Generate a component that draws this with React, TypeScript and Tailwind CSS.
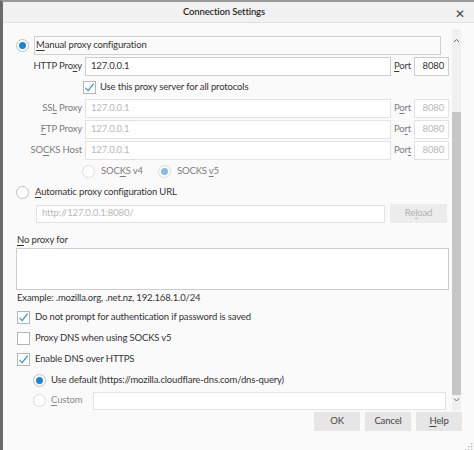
import React from "react";

const font = { fontFamily: 'Lato, "Noto Sans", Arial, sans-serif' };

function Radio({ checked, disabled }: { checked?: boolean; disabled?: boolean }) {
  return (
    <span
      className={`flex items-center justify-center w-[13px] h-[13px] shrink-0 rounded-full border bg-white ${
        disabled ? "border-[#dcdcdc]" : "border-[#b8c4cc]"
      }`}
    >
      {checked && (
        <span
          className={`w-[7px] h-[7px] rounded-full ${
            disabled ? "bg-[#7fbde6]" : "bg-[#1a86d6]"
          }`}
        />
      )}
    </span>
  );
}

function Checkbox({ checked }: { checked?: boolean }) {
  return (
    <span className="flex items-center justify-center w-[13px] h-[13px] shrink-0 border border-[#b5b5b5] bg-white">
      {checked && (
        <svg width="11" height="11" viewBox="0 0 11 11">
          <path d="M1.5 5.8 L4.2 8.6 L9.6 1.6" fill="none" stroke="#2f8ed8" strokeWidth="1.2" />
        </svg>
      )}
    </span>
  );
}

function U({ children }: { children: React.ReactNode }) {
  return <span className="underline underline-offset-2 decoration-[1px]">{children}</span>;
}

function ProxyRow({
  label,
  port,
  disabled,
}: {
  label: React.ReactNode;
  port: React.ReactNode;
  disabled?: boolean;
}) {
  const txt = disabled ? "text-[#b8b8b8]" : "text-[#333]";
  const border = disabled ? "border-[#e2e2e2]" : "border-[#cdcdcd]";
  const lbl = disabled ? "text-[#7c7c7c]" : "text-[#3a3a3a]";
  return (
    <div className="flex items-center h-[21px]">
      <div className={`w-[66px] text-right ${lbl}`}>{label}</div>
      <div className={`ml-[3px] flex-1 h-[19px] border ${border} bg-white flex items-center pl-[5px] ${txt}`}>
        127.0.0.1
      </div>
      <div className={`ml-[3px] w-[19px] ${lbl}`}>{port}</div>
      <div className={`ml-[1px] w-[35px] h-[19px] border ${border} bg-white flex items-center justify-end pr-[4px] ${txt}`}>
        8080
      </div>
    </div>
  );
}

export default function App() {
  return (
    <div
      className="w-[474px] h-[450px] flex flex-col bg-[#fafafa] border-l-[3px] border-l-[#6c6c6c] border-t-2 border-t-[#9a9a9a] text-[9.5px] tracking-[-0.15px] text-[#3a3a3a] overflow-hidden"
      style={font}
    >
      {/* Title bar */}
      <div className="relative h-[21px] shrink-0 bg-[#f1f1f1] border-b border-[#e2e2e2] flex items-center justify-center pr-[29px]">
        <span className="font-semibold text-[#2a2a2a]">Connection Settings</span>
        <span className="absolute right-[9px] top-[3px] text-[12px] text-[#444]">✕</span>
      </div>

      {/* Body */}
      <div className="flex flex-1">
        <div className="ml-[13px] w-[433px] flex flex-col pt-[12px]">
          <div className="flex items-center h-[21px]">
            <Radio checked />
            <div className="ml-[5px] w-[407px] h-[19px] border border-[#cfcfcf] flex items-center pl-[1px] text-[#333]">
              <U>M</U>anual proxy configuration
            </div>
          </div>

          <ProxyRow label={<>HTTP Pro<U>x</U>y</>} port={<><U>P</U>ort</>} />

          <div className="flex items-center h-[21px] pl-[67px]">
            <Checkbox checked />
            <span className="ml-[4px] text-[#333]">Use this proxy server for all protocols</span>
          </div>

          <ProxyRow disabled label={<>SS<U>L</U> Proxy</>} port={<>P<U>o</U>rt</>} />
          <ProxyRow disabled label={<><U>F</U>TP Proxy</>} port={<>Po<U>r</U>t</>} />
          <ProxyRow disabled label={<>SO<U>C</U>KS Host</>} port={<>Por<U>t</U></>} />

          <div className="flex items-center h-[21px] pl-[66px] text-[#7c7c7c]">
            <Radio disabled />
            <span className="ml-[6px]">SOC<U>K</U>S v4</span>
            <span className="ml-[15px]">
              <Radio checked disabled />
            </span>
            <span className="ml-[6px]">SOCKS <U>v</U>5</span>
          </div>

          <div className="flex items-center h-[21px]">
            <Radio />
            <span className="ml-[6px] text-[#333]">
              <U>A</U>utomatic proxy configuration URL
            </span>
          </div>

          <div className="flex items-center h-[21px] pl-[20px]">
            <div className="w-[349px] h-[18px] border border-[#e2e2e2] bg-white flex items-center pl-[5px] text-[#b8b8b8]">
              http://127.0.0.1:8080/
            </div>
            <div className="ml-[5px] w-[57px] h-[19px] bg-[#ececec] flex items-center justify-center text-[#b0b0b0]">
              Re<U>l</U>oad
            </div>
          </div>

          <div className="mt-[8px] h-[16px] flex items-center pl-[1px] text-[#333]">
            <span>
              <U>N</U>o proxy for
            </span>
          </div>
          <div className="h-[42px] border border-[#cdcdcd] bg-white" />

          <div className="h-[17px] flex items-center pl-[1px] text-[#333]">
            Example: .mozilla.org, .net.nz, 192.168.1.0/24
          </div>

          <div className="flex items-center h-[21px] pl-[1px]">
            <Checkbox checked />
            <span className="ml-[5px] text-[#333]">Do not prompt for authentication if password is saved</span>
          </div>
          <div className="flex items-center h-[21px] pl-[1px]">
            <Checkbox />
            <span className="ml-[5px] text-[#333]">Proxy DNS when using SOCKS v5</span>
          </div>
          <div className="flex items-center h-[21px] pl-[1px]">
            <Checkbox checked />
            <span className="ml-[5px] text-[#333]">Enable DNS over HTTPS</span>
          </div>
          <div className="flex items-center h-[20px] pl-[17px]">
            <Radio checked />
            <span className="ml-[5px] text-[#333]">Use default (https://mozilla.cloudflare-dns.com/dns-query)</span>
          </div>
          <div className="flex items-center h-[21px] pl-[17px]">
            <Radio disabled />
            <span className="ml-[5px] w-[42px] text-[#8a8a8a]">
              <U>C</U>ustom
            </span>
            <div className="w-[353px] h-[18px] border border-[#e2e2e2] bg-white" />
          </div>
        </div>

        {/* Scrollbar */}
        <div className="ml-[3px] mt-[6px] w-[9px] h-[382px] flex flex-col items-center bg-[#f0f0f0]">
          <svg width="9" height="12" viewBox="0 0 9 12" className="mt-[6px]">
            <path d="M2 7 L4.5 4.5 L7 7" fill="none" stroke="#666" strokeWidth="1" />
          </svg>
          <div className="mt-[65px] w-[9px] h-[283px] bg-[#c6c6c6]" />
          <svg width="9" height="10" viewBox="0 0 9 10">
            <path d="M2 3.5 L4.5 6 L7 3.5" fill="none" stroke="#666" strokeWidth="1" />
          </svg>
        </div>
      </div>

      {/* Buttons */}
      <div className="relative h-[42px] shrink-0 flex items-start justify-end gap-[5px] pr-[12px] pt-[1px]">
        <div className="w-[46px] h-[19px] bg-[#e6e6e6] flex items-center justify-center text-[#444]">OK</div>
        <div className="w-[46px] h-[19px] bg-[#e6e6e6] flex items-center justify-center text-[#444]">Cancel</div>
        <div className="w-[46px] h-[19px] bg-[#e6e6e6] flex items-center justify-center text-[#444]">
          <U>H</U>elp
        </div>
        <svg width="8" height="8" viewBox="0 0 8 8" className="absolute right-[1px] bottom-[2px]">
          <g fill="#b0b0b0">
            <rect x="6" y="0" width="1.3" height="1.3" />
            <rect x="3" y="3" width="1.3" height="1.3" />
            <rect x="6" y="3" width="1.3" height="1.3" />
            <rect x="0" y="6" width="1.3" height="1.3" />
            <rect x="3" y="6" width="1.3" height="1.3" />
            <rect x="6" y="6" width="1.3" height="1.3" />
          </g>
        </svg>
      </div>
    </div>
  );
}
